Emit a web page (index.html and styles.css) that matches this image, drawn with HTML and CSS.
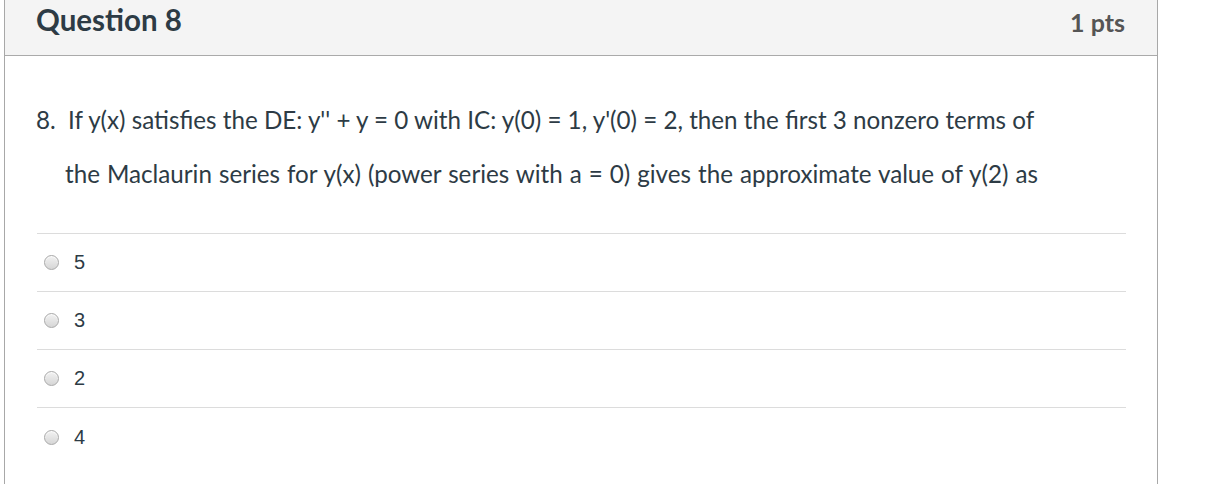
FILE: index.html
```html
<!DOCTYPE html>
<html>
<head>
<meta charset="utf-8">
<link rel="stylesheet" href="styles.css">
</head>
<body>
<div class="card">
  <div class="header">
    <h2 class="title">Question 8</h2>
    <div class="pts">1 pts</div>
  </div>
  <div class="body">
    <p class="question">8.&nbsp; If y(x) satisfies the DE: y'' + y = 0 with IC: y(0) = 1, y'(0) = 2, then the first 3 nonzero terms of<br><span class="line2">the Maclaurin series for y(x) (power series with a = 0) gives the approximate value of y(2) as</span></p>
    <div class="answers">
      <label class="answer"><span class="radio"></span><span class="ans-text">5</span></label>
      <label class="answer"><span class="radio"></span><span class="ans-text">3</span></label>
      <label class="answer"><span class="radio"></span><span class="ans-text">2</span></label>
      <label class="answer"><span class="radio"></span><span class="ans-text">4</span></label>
    </div>
  </div>
</div>
</body>
</html>
```
FILE: styles.css
```css
html, body {
  margin: 0;
  padding: 0;
  background: #fff;
}
.card {
  margin-left: 4px;
  width: 1152px;
  border-left: 1px solid #a8a8a8;
  border-right: 1px solid #a8a8a8;
  font-family: Lato, "Open Sans", sans-serif;
  color: #2d3b45;
  height: 484px;
}
.header {
  background: #f4f4f4;
  border-bottom: 1px solid #aaaaaa;
  height: 56px;
  box-sizing: border-box;
  display: flex;
  justify-content: space-between;
  align-items: flex-start;
  padding: 2px 32px 0 31px;
}
.title {
  margin: 0;
  font-size: 29.5px;
  font-weight: 700;
  line-height: 36px;
  color: #2d3b45;
}
.pts {
  font-size: 25px;
  font-weight: 700;
  line-height: 40px;
  color: #555;
}
.body {
  padding: 37px 31px 0 31px;
}
.question {
  margin: 0 0 32px 0;
  font-size: 24.2px;
  line-height: 54px;
  padding-left: 29px;
  text-indent: -29px;
  white-space: nowrap;
}
.line2 {
  word-spacing: 0.8px;
}
.answers {
  margin-left: 1px;
}
.answer {
  display: flex;
  align-items: center;
  height: 58px;
  box-sizing: border-box;
  border-top: 1px solid #dcdcdc;
  padding-left: 7px;
}
.answer:nth-child(4) {
  height: 59px;
}
.radio {
  width: 13px;
  height: 13px;
  border-radius: 50%;
  border: 1px solid #a9a9a9;
  background: linear-gradient(#f2f2f2, #d6d6d6);
  box-shadow: inset 0 1px 1px rgba(255,255,255,0.8);
}
.ans-text {
  margin-left: 15px;
  font-family: "Liberation Sans", Arial, sans-serif;
  font-size: 20px;
  color: #2d3b45;
}
```
